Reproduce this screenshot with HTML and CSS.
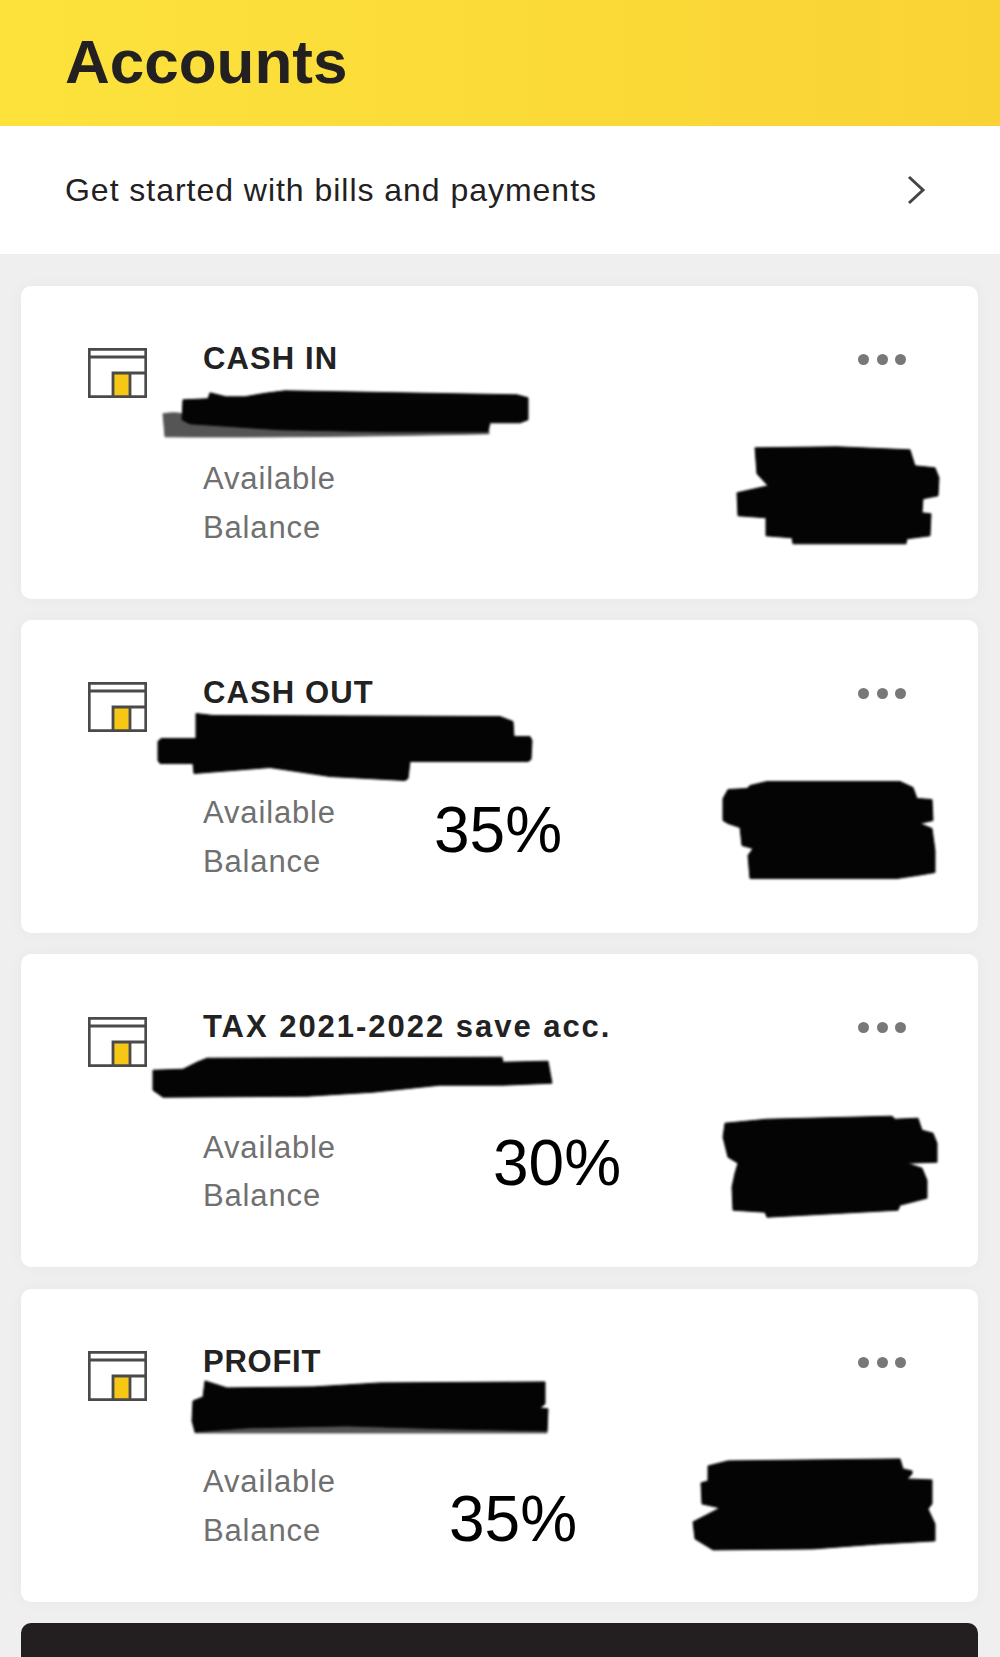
FILE: index.html
```html
<!DOCTYPE html>
<html lang="en">
<head>
<meta charset="utf-8">
<title>Accounts</title>
<link rel="stylesheet" href="styles.css">
</head>
<body>
<svg class="defs" width="0" height="0" aria-hidden="true">
  <symbol id="acct" viewBox="0 0 59 50">
    <path class="ic-fill" d="M26 26h15v23H26z"/>
    <path class="ic-line" d="M1.25 1.25h56.5v47.5H1.25zM1.25 9h56.5M25 49V25h33M42 25v24"/>
  </symbol>
</svg>
<header class="top"><h1>Accounts</h1></header>
<a class="promo">
  <span>Get started with bills and payments</span>
  <svg class="chev" viewBox="0 0 19 30"><path d="M2 2l14 13L2 28"/></svg>
</a>
<main class="list">
  <section class="card">
    <svg class="icon"><use href="#acct"/></svg>
    <div class="body"><h2>CASH IN</h2><p class="lab">Available<br>Balance</p></div>
    <div class="more"><i></i><i></i><i></i></div>
    <svg class="ink" viewBox="21 285.2 958 313">
      <path class="soft" d="M163 413Q175 411 182 413L300 430 488 423 489 433Q300 437 165 436Z"/>
      <path d="M183 399L208 398 210 392 226 396 245 396Q265 392 285 390L517 394 528 397 528 419 520 422 490 422 488 431 380 431 280 429 190 423 182 419Z"/>
      <path d="M755 447L837 446 910 449 915 465 935 467 939 477 938 495 923 498 922 512 931 513 930 535 907 538 906 543 793 543 792 537 766 535 766 517 738 515 737 492 768 485 757 473Z"/>
    </svg>
  </section>
  <section class="card">
    <svg class="icon"><use href="#acct"/></svg>
    <div class="body"><h2>CASH OUT</h2><p class="lab">Available<br>Balance</p></div>
    <div class="more"><i></i><i></i><i></i></div>
    <span class="pct pct-out">35%</span>
    <svg class="ink" viewBox="21 619.5 958 313">
      <path d="M196 713L213 715 500 716 513 721 514 736 530 736 532 740 531 759 528 761 410 761 408 778 405 780 330 776 270 767 194 773 193 763 160 763 158 760 158 741 161 738 196 738Z"/>
      <path d="M750 785L767 781 900 781 913 787 917 798 932 799 933 820 920 823 932 828 935 850 935 872 917 875 897 878 750 878 748 855 753 848 742 845 740 827 728 823 723 820 723 798 728 789 747 788Z"/>
    </svg>
  </section>
  <section class="card">
    <svg class="icon"><use href="#acct"/></svg>
    <div class="body"><h2 class="wide">TAX 2021-2022 save acc.</h2><p class="lab">Available<br>Balance</p></div>
    <div class="more"><i></i><i></i><i></i></div>
    <span class="pct pct-tax">30%</span>
    <svg class="ink" viewBox="21 953.8 958 313">
      <path d="M153 1070L183 1069 197 1062 207 1058 502 1057 503 1062 548 1061 552 1083 503 1085 440 1085 373 1092 307 1096 163 1097 153 1090Z"/>
      <path d="M725 1123L767 1119 892 1116 895 1119 918 1118 922 1130 933 1133 937 1143 937 1162 907 1163 922 1168 927 1180 927 1198 900 1205 898 1210 767 1217 765 1212 733 1210 732 1187 735 1173 738 1163 728 1157 723 1137Z"/>
    </svg>
  </section>
  <section class="card">
    <svg class="icon"><use href="#acct"/></svg>
    <div class="body"><h2 class="tight">PROFIT</h2><p class="lab">Available<br>Balance</p></div>
    <div class="more"><i></i><i></i><i></i></div>
    <span class="pct pct-profit">35%</span>
    <svg class="ink" viewBox="21 1288.1 958 313">
      <path class="soft" d="M195 1415L547 1415 547 1432 195 1432Z"/>
      <path d="M205 1380L227 1387 313 1386 380 1382 545 1381 545 1403 540 1407 548 1408 547 1430 447 1428 347 1425 247 1427 195 1431 192 1420 193 1400 203 1396Z"/>
      <path d="M708 1465L728 1460 900 1458 903 1468 912 1470 912 1473 907 1478 932 1479 932 1503 928 1508 935 1523 935 1540 880 1543 813 1548 713 1549 695 1538 693 1521 720 1507 702 1503 701 1482 708 1480Z"/>
    </svg>
  </section>
  <div class="bar"></div>
</main>
</body>
</html>
```

FILE: styles.css
```css
* { box-sizing: border-box; }
html, body { margin: 0; padding: 0; }
body {
  height: 1657px;
  overflow: hidden;
  background: #efefef;
  font-family: "Liberation Sans", Arial, sans-serif;
  color: #232021;
}
.defs { position: absolute; }
.top {
  height: 126px;
  padding-left: 65px;
  display: flex;
  align-items: center;
  background: linear-gradient(90deg, #fde23c 0%, #fbdb38 50%, #f9d334 100%);
}
.top h1 { margin: 0 0 3px; font-size: 62px; line-height: 1; font-weight: 700; }
.promo {
  height: 128px;
  padding: 0 74px 0 65px;
  display: flex;
  align-items: center;
  justify-content: space-between;
  background: #fff;
  font-size: 32px;
  letter-spacing: 0.97px;
}
.chev { width: 19px; height: 30px; }
.chev path { fill: none; stroke: #454545; stroke-width: 3; }
.list {
  padding: 31.7px 22px 0 21px;
  display: flex;
  flex-direction: column;
  gap: 21.3px;
  background: #efefef;
}
.card {
  position: relative;
  height: 313px;
  padding: 0 72px 0 67px;
  display: flex;
  align-items: flex-start;
  border-radius: 10px;
  background: #fff;
  box-shadow: 0 0 16px rgba(0, 0, 0, 0.035);
}
.icon { flex: none; width: 59px; height: 50px; margin-top: 62.5px; }
.ic-line { fill: none; stroke: #4a4a4a; stroke-width: 2.8; }
.ic-fill { fill: #f6c714; }
.body { flex: 1; margin-left: 56px; padding-top: 53px; }
.body h2 {
  margin: 0;
  font-size: 31px;
  line-height: 40px;
  font-weight: 700;
  letter-spacing: 1.1px;
  color: #222;
}
.body h2.wide { letter-spacing: 1.97px; }
.body h2.tight { letter-spacing: 0.75px; }
.lab {
  margin: 76.5px 0 0;
  font-size: 31px;
  line-height: 48.7px;
  letter-spacing: 0.85px;
  color: #707070;
}
.more { display: flex; gap: 7.5px; margin-top: 68px; }
.more i { width: 11px; height: 11px; border-radius: 50%; background: #787878; }
.pct {
  position: absolute;
  font-size: 64px;
  line-height: 70px;
  color: #000;
}
.pct-out { left: 413px; top: 175px; }
.pct-tax { left: 472px; top: 173.5px; }
.pct-profit { left: 428px; top: 195.5px; }
.ink {
  position: absolute;
  left: 0;
  top: 0;
  width: 958px;
  height: 313px;
  overflow: hidden;
  filter: blur(1.1px);
  pointer-events: none;
}
.ink path { fill: #040404; stroke: #040404; stroke-width: 1; stroke-linejoin: round; }
.ink path.soft { fill: #555; stroke: #555; }
.bar { height: 40px; border-radius: 10px 10px 0 0; background: #231f20; }
```
